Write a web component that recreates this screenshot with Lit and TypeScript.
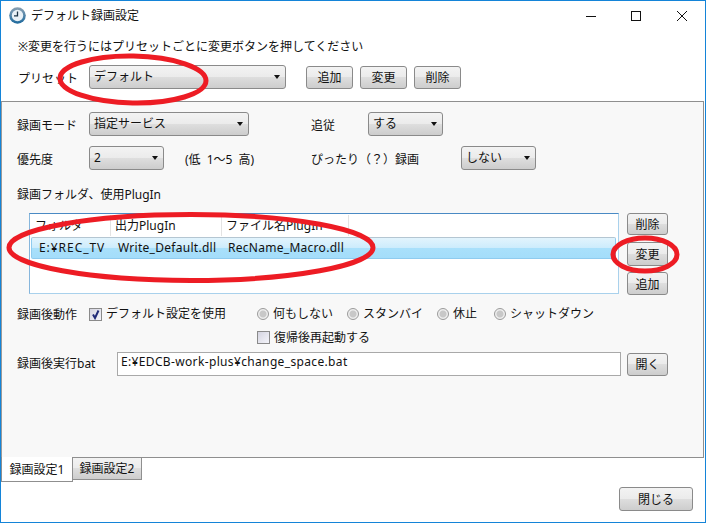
import { LitElement, html, css, svg } from "lit";
import { customElement } from "lit/decorators.js";

@customElement("app-root")
export class AppRoot extends LitElement {
  static styles = css`
    :host { display: block; width: 706px; height: 523px; overflow: hidden; }
    * { box-sizing: border-box; }
    .window {
      position: relative; width: 706px; height: 523px; background: #fff;
      border: 1px solid #1484d8; display: flex; flex-direction: column;
      font: 12px/16px "Noto Sans", "Noto Sans CJK JP", sans-serif; color: #111;
    }
    .title { height: 29px; flex: none; display: flex; align-items: center; padding-left: 8px; padding-right: 9px; }
    .title .cap { margin-left: 5px; flex: 1; }
    .ctl { flex: none; display: block; }
    .top { height: 71px; flex: none; padding: 9px 0 0 17px; }
    .preset { display: flex; align-items: center; margin-top: 10px; height: 24px; }
    .lbl-a { width: 71px; flex: none; padding-top: 3px; }
    .panel {
      height: 357px; flex: none; border: 1px solid #8f8f8f; border-left-color: #9a9a9a;
      width: 703px; background: #f8f8f8; padding: 10px 0 0 15px;
    }
    .row { display: flex; align-items: center; height: 24px; }
    .row + .row { margin-top: 10px; }
    .combo {
      height: 24px; border: 1px solid #8a8a8a; border-radius: 3px; flex: none;
      background: linear-gradient(#f3f3f3, #ebebeb 50%, #dedede 50%, #cdcdcd);
      display: flex; align-items: center; justify-content: space-between; padding: 0 5px 0 4px;
    }
    .combo::after {
      content: ""; border: 3.5px solid transparent; border-top: 4px solid #111; border-bottom: 0;
    }
    .w196 { width: 197px; margin-right: 20px; }
    .w160 { width: 160px; margin-right: 62px; }
    .w75 { width: 75px; }
    .w76 { width: 75px; margin-right: 21px; }
    .lbl-b { width: 57px; flex: none; padding-top: 3px; }
    .lbl-c { width: 126px; flex: none; padding-top: 3px; word-spacing: 3px; }
    .lbl-d { width: 150px; flex: none; padding-top: 3px; }
    .btn {
      height: 23px; border: 1px solid #8a8a8a; border-radius: 3px; flex: none; width: 47px;
      background: linear-gradient(#f3f3f3, #ebebeb 50%, #dedede 50%, #cdcdcd);
      display: flex; align-items: center; justify-content: center; padding: 2px 0 0;
      font: inherit; color: inherit;
    }
    .preset .btn + .btn { margin-left: 7px; }
    .btn.side { width: 41px; }
    .section { margin-top: 16px; height: 16px; padding-top: 1px; }
    .listwrap { display: flex; margin: 11px 0 0 12px; }
    .list {
      width: 590px; height: 81px; flex: none; background: #fff; border: 1px solid #a9d1ec;
      border-top-color: #4a8ac4; border-left-color: #86b6dc; padding: 1px;
    }
    .head { display: flex; height: 21px; }
    .head span {
      height: 21px; padding: 0 0 0 4px; border-right: 1px solid #e3e3e3; overflow: hidden; white-space: nowrap;
      display: flex; align-items: center;
    }
    .c1 { width: 80px; }
    .c2 { width: 111px; }
    .c3 { width: 127px; }
    .sel {
      height: 22px; margin: 1px 1px 0 0; display: flex; align-items: center;
      border: 1px solid #8fcbef; border-top-color: #b4c6d2; border-radius: 2px;
      background: linear-gradient(#e2f4fd, #cdecfc 48%, #a9e0fb 52%, #a4ddfa);
    }
    .sel span { padding-left: 7px; padding-bottom: 1px; white-space: nowrap; letter-spacing: 0.28px; }
    .sel .c1 { width: 79px; letter-spacing: 0.95px; }
    .sel .c2 { width: 110px; padding-left: 7px; }
    .sel .c3 { padding-left: 7px; width: auto; }
    .sidebtns { display: flex; flex-direction: column; margin-left: 8px; gap: 6px; }
    .sidebtns .btn:first-child { height: 22px; }
    .sidebtns .btn:nth-child(2) { height: 24px; margin-top: 1px; }
    .after { display: flex; align-items: center; height: 16px; margin-top: 11px; }
    .lbl-e { width: 72px; flex: none; padding-top: 3px; }
    .after .lbl-e { padding-top: 1px; }
    .check {
      width: 13px; height: 13px; border: 1px solid #8a8a8a; flex: none; display: block;
      background: linear-gradient(135deg, #d4d4e0, #f4f4fa);
    }
    .check svg { display: block; }
    .after .checklabel { margin-left: 4px; width: 151px; flex: none; }
    .radio {
      width: 12px; height: 12px; border-radius: 50%; border: 1px solid #9a9a9a; flex: none;
      background: radial-gradient(circle, #c8c8c8 0 3px, #eeeeee 4px);
    }
    .r-label { margin-left: 4px; flex: none; }
    .r1 { width: 74px; }
    .r2 { width: 74px; }
    .r3 { width: 41px; }
    .second { display: flex; align-items: center; height: 16px; margin: 7px 0 0 240px; }
    .second .checklabel { margin-left: 4px; padding-top: 2px; }
    .batrow { display: flex; align-items: center; margin-top: 7px; height: 24px; }
    .lbl-f { width: 100px; flex: none; }
    .input {
      width: 504px; height: 24px; border: 1px solid #a9a9a9; background: #fff; flex: none;
      display: flex; align-items: center; padding: 0 0 4px 3px; letter-spacing: 0.35px;
    }
    .batrow .btn { margin-left: 6px; }
    .tabs { display: flex; height: 25px; margin-top: -1px; position: relative; flex: none; }
    .tab1 {
      width: 72px; height: 25px; background: #fff; border: 1px solid #8f8f8f; border-top: 0;
      display: flex; align-items: center; justify-content: center; padding-top: 1px;
    }
    .tab2 {
      width: 69px; height: 23px; border: 1px solid #8f8f8f; border-left: 0;
      background: linear-gradient(#f3f3f3, #ebebeb 50%, #dedede 50%, #cdcdcd);
      display: flex; align-items: center; justify-content: center;
    }
    .foot { display: flex; justify-content: flex-end; padding: 5px 12px 0 0; }
    .foot .btn { width: 74px; height: 24px; }
    .marks { position: absolute; left: -1px; top: -1px; pointer-events: none; }
  `;

  private clock() {
    return svg`<svg class="ctl" width="17" height="17" viewBox="0 0 17 17">
      <defs><linearGradient id="r" x1="0" y1="0" x2="0" y2="1"><stop offset="0" stop-color="#8aa0b2"/><stop offset="1" stop-color="#1d6a9e"/></linearGradient></defs>
      <circle cx="8.5" cy="8.5" r="8.3" fill="url(#r)"/>
      <circle cx="8.5" cy="8.5" r="5.7" fill="#e8f0f6"/>
      <path d="M8.5 4.6V8.9H5" fill="none" stroke="#1c3447" stroke-width="1.3"/>
    </svg>`;
  }

  render() {
    return html`<div class="window">
      <div class="title">
        ${this.clock()}
        <span class="cap">デフォルト録画設定</span>
        <svg class="ctl" width="125" height="29" viewBox="0 0 125 29">
          <path d="M15 15.5H25" stroke="#111" fill="none"/>
          <rect x="60.5" y="10.5" width="9" height="9" stroke="#111" fill="none"/>
          <path d="M106 10L116 20M116 10L106 20" stroke="#111" fill="none"/>
        </svg>
      </div>
      <div class="top">
        <div>※変更を行うにはプリセットごとに変更ボタンを押してください</div>
        <div class="preset">
          <span class="lbl-a">プリセット</span>
          <div class="combo w196">デフォルト</div>
          <button class="btn">追加</button>
          <button class="btn">変更</button>
          <button class="btn">削除</button>
        </div>
      </div>
      <div class="panel">
        <div class="row">
          <span class="lbl-e">録画モード</span>
          <div class="combo w160">指定サービス</div>
          <span class="lbl-b">追従</span>
          <div class="combo w75">する</div>
        </div>
        <div class="row">
          <span class="lbl-e">優先度</span>
          <div class="combo w76">2</div>
          <span class="lbl-c">(低 1～5 高)</span>
          <span class="lbl-d">ぴったり（？）録画</span>
          <div class="combo w75">しない</div>
        </div>
        <div class="section">録画フォルダ、使用PlugIn</div>
        <div class="listwrap">
          <div class="list">
            <div class="head">
              <span class="c1">フォルダ</span><span class="c2">出力PlugIn</span><span class="c3">ファイル名PlugIn</span>
            </div>
            <div class="sel">
              <span class="c1">E:¥REC_TV</span><span class="c2">Write_Default.dll</span><span class="c3">RecName_Macro.dll</span>
            </div>
          </div>
          <div class="sidebtns">
            <button class="btn side">削除</button>
            <button class="btn side">変更</button>
            <button class="btn side">追加</button>
          </div>
        </div>
        <div class="after">
          <span class="lbl-e">録画後動作</span>
          <span class="check"><svg width="11" height="11" viewBox="0 0 11 11"><path d="M3 5.5L5 9L8.5 1.5" fill="none" stroke="#1f2a78" stroke-width="2"/></svg></span>
          <span class="checklabel">デフォルト設定を使用</span>
          <span class="radio"></span><span class="r-label r1">何もしない</span>
          <span class="radio"></span><span class="r-label r2">スタンバイ</span>
          <span class="radio"></span><span class="r-label r3">休止</span>
          <span class="radio"></span><span class="r-label">シャットダウン</span>
        </div>
        <div class="second">
          <span class="check"></span><span class="checklabel">復帰後再起動する</span>
        </div>
        <div class="batrow">
          <span class="lbl-f">録画後実行bat</span>
          <div class="input">E:¥EDCB-work-plus¥change_space.bat</div>
          <button class="btn side">開く</button>
        </div>
      </div>
      <div class="tabs">
        <div class="tab1">録画設定1</div>
        <div class="tab2">録画設定2</div>
      </div>
      <div class="foot"><button class="btn">閉じる</button></div>
      <svg class="marks" width="706" height="523" viewBox="0 0 706 523">
        <g fill="none" stroke="#ed1c24" stroke-width="5">
          <ellipse cx="133" cy="79.5" rx="73" ry="23.5" transform="rotate(1 133 79.5)"/>
          <ellipse cx="191" cy="247.5" rx="182" ry="33" />
          <ellipse cx="645" cy="254.5" rx="32" ry="16.5" />
        </g>
      </svg>
    </div>`;
  }
}
